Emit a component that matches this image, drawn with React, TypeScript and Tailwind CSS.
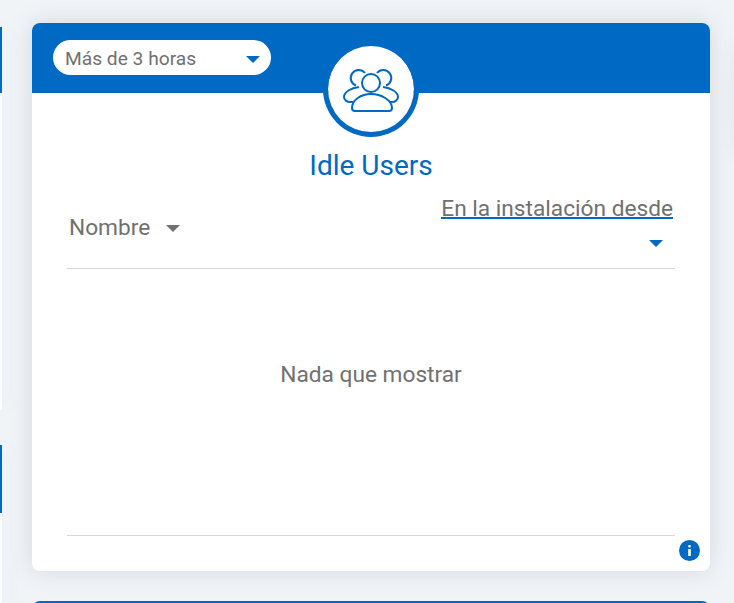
import React from 'react';

const font = 'font-["Roboto",sans-serif]';

function Caret({ className }: { className: string }) {
  return <span className={`block h-0 w-0 border-x-[7px] border-t-[7px] border-x-transparent ${className}`} />;
}

function UsersIcon() {
  return (
    <svg width="60" height="46" viewBox="0 0 60 46" fill="none" stroke="#0069c4" strokeWidth="2">
      <path d="M24 7a8 8 0 1 0-9 12.500" />
      <path d="M36 7a8 8 0 1 1 9 12.500" />
      <path d="M18 21C10 22 3 26 3 31c0 3 3 5 6 5h3" />
      <path d="M42 21c8 1 15 5 15 10 0 3-3 5-6 5h-3" />
      <circle cx="30" cy="17" r="9" />
      <path d="M14 45c-2 0-3-1-3-3 0-8 9-14 19-14s21 6 21 14c0 2-1 3-3 3Z" />
    </svg>
  );
}

function InfoIcon() {
  return (
    <svg width="21" height="21" viewBox="0 0 21 21">
      <circle cx="10.500" cy="10.500" r="10.500" fill="#0069c4" />
      <rect x="9.200" y="5" width="2.600" height="2.600" rx="1" fill="#fff" />
      <rect x="9.200" y="9" width="2.600" height="7" fill="#fff" />
    </svg>
  );
}

export default function App() {
  return (
    <div className={`flex h-[603px] w-[734px] overflow-hidden bg-[#f1f4f7] ${font}`}>
      {/* Neighbouring column, cut off by the window */}
      <div className="flex w-[2px] shrink-0 flex-col pt-[27px]">
        <div className="h-[383px] shrink-0 bg-white shadow-[0_0_24px_rgba(60,80,110,0.16)]">
          <div className="h-[66px] bg-[#0069c4]" />
        </div>
        <div className="mt-[35px] h-[200px] shrink-0 bg-white shadow-[0_0_24px_rgba(60,80,110,0.16)]">
          <div className="h-[68px] bg-[#0069c4]" />
        </div>
      </div>

      <div className="ml-[30px] flex w-[678px] shrink-0 flex-col pt-[23px]">
        <section className="relative flex h-[548px] shrink-0 flex-col rounded-lg bg-white shadow-[0_0_24px_rgba(60,80,110,0.16)]">
          <header className="h-[70px] shrink-0 rounded-t-lg bg-[#0069c4] pl-[21px] pt-[17px]">
            <div className="flex h-[35px] w-[218px] items-center justify-between rounded-full bg-white pl-[12px] pr-[11px] text-[19.200px] text-[#707070]">
              <span className="pt-[4px]">Más de 3 horas</span>
              <Caret className="mt-[3px] border-t-[#0069c4]" />
            </div>
          </header>

          <div className="absolute left-[291px] top-[18px] flex h-[96px] w-[96px] items-center justify-center rounded-full border-[5px] border-[#0069c4] border-t-transparent bg-white bg-clip-padding">
            <UsersIcon />
          </div>

          <div className="flex min-h-0 flex-1 flex-col px-[35px]">
            <h2 className="mt-[56px] text-center text-[28px] leading-[34px] text-[#0069c4]">Idle Users</h2>

            <div className="flex h-[86px] justify-between border-b border-[#d5d8da] px-[2px]">
              <div className="flex h-[90px] items-center gap-[16px] text-[22.700px] text-[#707070]">
                Nombre
                <Caret className="border-t-[#707070]" />
              </div>
              <div className="flex flex-col items-end">
                <span className="mt-[17px] border-b-2 border-[#0069c4] text-[22.700px] leading-[17px] text-[#707070]">
                  En la instalación desde
                </span>
                <Caret className="mr-[10px] mt-[21px] border-t-[#0069c4]" />
              </div>
            </div>

            <div className="h-[267px] border-b border-[#d5d8da] pt-[91px] text-center text-[22.700px] leading-[30px] text-[#707070]">
              Nada que mostrar
            </div>

            <div className="-mr-[25px] flex justify-end pt-[4px]">
              <InfoIcon />
            </div>
          </div>
        </section>

        <div className="mt-[30px] h-[40px] shrink-0 rounded-t-lg bg-[#0069c4]" />
      </div>

      {/* Card just past the right edge, only its shadow shows */}
      <div className="ml-[32px] mt-[50px] h-[100px] w-[100px] shrink-0 bg-white shadow-[0_0_24px_rgba(60,80,110,0.16)]" />
    </div>
  );
}
